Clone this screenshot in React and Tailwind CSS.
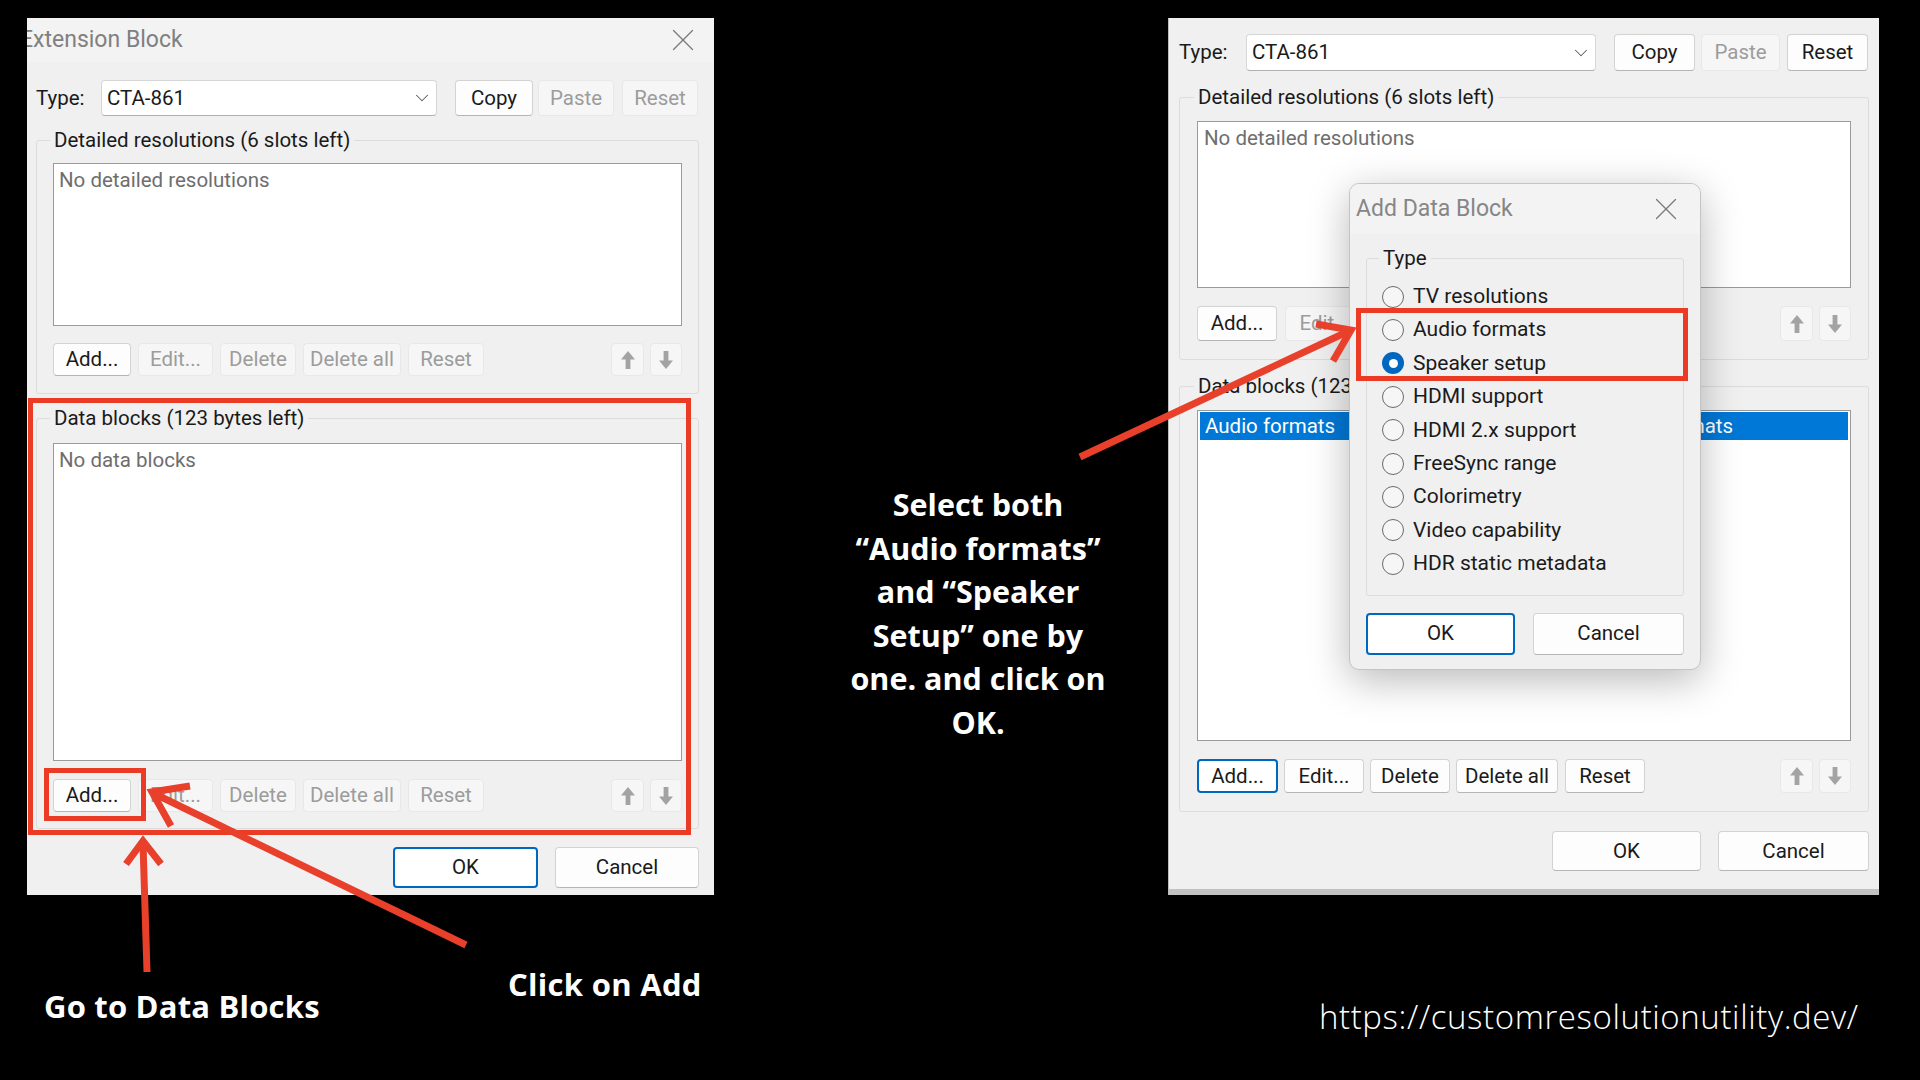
import { ChevronDown, X } from "lucide-react";
import clsx from "clsx";

const ui = { fontFamily: "Roboto, 'Noto Sans', sans-serif" };

const Btn = ({ children, w, h = "h-full", disabled, focus, className }) => (
  <div
    className={clsx(
      "flex items-center justify-center rounded-[4px] border shrink-0",
      disabled
        ? "bg-[#f6f6f6] border-[#e8e8e8] text-[#9c9c9c]"
        : focus
        ? "bg-white border-2 border-[#0067c0] text-[#1a1a1a]"
        : "bg-[#fdfdfd] border-[#d3d3d3] border-b-[#b5b5b5] text-[#1a1a1a]",
      w,
      h,
      className
    )}
  >
    {children}
  </div>
);

// thick windows-style arrow glyph
const BlockArrow = ({ down }) => (
  <svg width="16" height="20" viewBox="0 0 16 20" className={down ? "rotate-180" : ""}>
    <polygon points="8,1 1,9.5 15,9.5" fill="#a3a3a3" />
    <rect x="5.6" y="8" width="4.8" height="11" fill="#a3a3a3" />
  </svg>
);

const Arrows = () => (
  <>
    <Btn w="w-[33px]" disabled className="ml-auto">
      <BlockArrow />
    </Btn>
    <Btn w="w-[32px]" disabled className="ml-[6px]">
      <BlockArrow down />
    </Btn>
  </>
);

const Legend = ({ children }) => (
  <legend className="-ml-[3px] px-[4px] leading-[28px] text-[20.5px] text-[#1a1a1a]">{children}</legend>
);

const LeftDialog = () => (
  <div style={ui} className="absolute left-[27px] top-[18px] w-[687px] h-[877px] bg-[#f0f0f0] overflow-hidden flex flex-col text-[20.5px]">
    <div className="h-[44px] bg-[#f3f3f3] flex items-center justify-between shrink-0">
      <span className="-ml-[7px] text-[#808080] text-[23px]">Extension Block</span>
      <X size={38} strokeWidth={0.8} color="#7a7a7a" className="mr-[12px]" />
    </div>

    <div className="mt-[18px] h-[36px] flex items-center pl-[9px] shrink-0">
      <span className="w-[65px] text-[#1a1a1a]">Type:</span>
      <div className="w-[336px] h-full bg-white border border-[#d6d6d6] border-b-[#b0b0b0] rounded-[4px] flex items-center justify-between pl-[5px] pr-[3px] text-[#1a1a1a]">
        CTA-861
        <ChevronDown size={22} strokeWidth={1.1} color="#5a5a5a" />
      </div>
      <Btn w="w-[78px]" className="ml-[18px]">Copy</Btn>
      <Btn w="w-[76px]" disabled className="ml-[5px]">Paste</Btn>
      <Btn w="w-[76px]" disabled className="ml-[8px]">Reset</Btn>
    </div>

    <fieldset className="mt-[10px] ml-[9px] mr-[15px] border border-[#dcdcdc] rounded-[3px] px-[16px] pt-[9px] pb-[17px]">
      <Legend>Detailed resolutions (6 slots left)</Legend>
      <div className="h-[163px] bg-white border border-[#9a9a9a] pl-[5px] pt-[1px] text-[#6e6e6e]">No detailed resolutions</div>
      <div className="mt-[17px] h-[33px] flex">
        <Btn w="w-[78px]">Add...</Btn>
        <Btn w="w-[75px]" disabled className="ml-[7px]">Edit...</Btn>
        <Btn w="w-[76px]" disabled className="ml-[7px]">Delete</Btn>
        <Btn w="w-[98px]" disabled className="ml-[7px]">Delete all</Btn>
        <Btn w="w-[76px]" disabled className="ml-[7px]">Reset</Btn>
        <Arrows />
      </div>
    </fieldset>

    <fieldset className="mt-[10px] ml-[9px] mr-[15px] border border-[#dcdcdc] rounded-[3px] px-[16px] pt-[11px] pb-[16px]">
      <Legend>Data blocks (123 bytes left)</Legend>
      <div className="h-[318px] bg-white border border-[#9a9a9a] pl-[5px] pt-[1px] text-[#6e6e6e]">No data blocks</div>
      <div className="mt-[18px] h-[33px] flex">
        <Btn w="w-[78px]">Add...</Btn>
        <Btn w="w-[75px]" disabled className="ml-[7px]">Edit...</Btn>
        <Btn w="w-[76px]" disabled className="ml-[7px]">Delete</Btn>
        <Btn w="w-[98px]" disabled className="ml-[7px]">Delete all</Btn>
        <Btn w="w-[76px]" disabled className="ml-[7px]">Reset</Btn>
        <Arrows />
      </div>
    </fieldset>

    <div className="mt-[18px] h-[41px] flex justify-end pr-[15px] shrink-0">
      <Btn w="w-[145px]" focus>OK</Btn>
      <Btn w="w-[144px]" className="ml-[17px]">Cancel</Btn>
    </div>

    {/* annotation boxes */}
    <div className="absolute left-[1px] top-[380px] w-[663px] h-[437px] border-[5px] border-[#ec3b24]" />
    <div className="absolute left-[17px] top-[750px] w-[102px] h-[53px] border-[5px] border-[#ec3b24]" />
  </div>
);

const radios = [
  "TV resolutions",
  "Audio formats",
  "Speaker setup",
  "HDMI support",
  "HDMI 2.x support",
  "FreeSync range",
  "Colorimetry",
  "Video capability",
  "HDR static metadata",
];

const Popup = () => (
  <div className="absolute left-[180px] top-[165px] w-[352px] h-[487px] bg-[#f0f0f0] border border-[#c4c4c4] rounded-[10px] shadow-[0_10px_40px_rgba(0,0,0,0.28)] flex flex-col overflow-hidden">
    <div className="h-[50px] bg-[#f3f3f3] flex items-center justify-between shrink-0">
      <span className="ml-[6px] text-[23px] text-[#868686]">Add Data Block</span>
      <X size={38} strokeWidth={0.8} color="#7a7a7a" className="mr-[15px]" />
    </div>
    <fieldset className="mt-[10px] mx-[16px] border border-[#dcdcdc] rounded-[3px] pl-[15px] pt-[8px] pb-[14px]">
      <Legend>Type</Legend>
      {radios.map((r) => (
        <div key={r} className="h-[33.4px] flex items-center text-[#1a1a1a]">
          {r === "Speaker setup" ? (
            <span className="w-[22px] h-[22px] rounded-full bg-[#0067c0] flex items-center justify-center shrink-0">
              <span className="w-[9px] h-[9px] rounded-full bg-white" />
            </span>
          ) : (
            <span className="w-[22px] h-[22px] rounded-full border-[1.5px] border-[#6b6b6b] bg-[#f6f6f6] shrink-0" />
          )}
          <span className="ml-[9px] text-[21px]">{r}</span>
        </div>
      ))}
    </fieldset>
    <div className="mt-[17px] h-[42px] flex mx-[16px]">
      <Btn w="w-[149px]" focus>OK</Btn>
      <Btn w="w-[151px]" className="ml-[18px]">Cancel</Btn>
    </div>
    <div className="absolute left-[6px] top-[124px] w-[332px] h-[73px] border-[5px] border-[#ec3b24]" />
  </div>
);

const RightDialog = () => (
  <div style={ui} className="absolute left-[1168px] top-[18px] w-[711px] h-[877px] bg-[#f0f0f0] border-l border-[#bdbdbd] flex flex-col text-[20.5px]">
    <div className="mt-[16px] h-[37px] flex items-center pl-[10px] shrink-0">
      <span className="w-[67px] text-[#1a1a1a]">Type:</span>
      <div className="w-[350px] h-full bg-white border border-[#d6d6d6] border-b-[#b0b0b0] rounded-[4px] flex items-center justify-between pl-[5px] pr-[3px] text-[#1a1a1a]">
        CTA-861
        <ChevronDown size={22} strokeWidth={1.1} color="#5a5a5a" />
      </div>
      <Btn w="w-[81px]" className="ml-[18px]">Copy</Btn>
      <Btn w="w-[79px]" disabled className="ml-[6px]">Paste</Btn>
      <Btn w="w-[81px]" className="ml-[7px]">Reset</Btn>
    </div>

    <fieldset className="mt-[12px] mx-[10px] border border-[#dcdcdc] rounded-[3px] px-[17px] pt-[10px] pb-[18px]">
      <Legend>Detailed resolutions (6 slots left)</Legend>
      <div className="h-[167px] bg-white border border-[#9a9a9a] pl-[6px] pt-[1px] text-[#6e6e6e]">No detailed resolutions</div>
      <div className="mt-[18px] h-[35px] flex">
        <Btn w="w-[80px]">Add...</Btn>
        <Btn w="w-[80px]" disabled className="ml-[8px]">Edit...</Btn>
        <Btn w="w-[80px]" disabled className="ml-[6px]">Delete</Btn>
        <Btn w="w-[102px]" disabled className="ml-[6px]">Delete all</Btn>
        <Btn w="w-[80px]" disabled className="ml-[7px]">Reset</Btn>
        <Arrows />
      </div>
    </fieldset>

    <fieldset className="mt-[12px] mx-[10px] border border-[#dcdcdc] rounded-[3px] px-[17px] pt-[10px] pb-[18px]">
      <Legend>Data blocks (123 bytes left)</Legend>
      <div className="h-[331px] bg-white border border-[#9a9a9a] pt-[1px] px-[2px]">
        <div className="h-[28px] bg-[#0078d7] text-white flex items-center pl-[5px]">
          <span>Audio formats</span>
          <span className="ml-[268px]">Audio formats</span>
        </div>
      </div>
      <div className="mt-[18px] h-[34px] flex">
        <Btn w="w-[81px]" focus>Add...</Btn>
        <Btn w="w-[80px]" className="ml-[6px]">Edit...</Btn>
        <Btn w="w-[80px]" className="ml-[6px]">Delete</Btn>
        <Btn w="w-[102px]" className="ml-[6px]">Delete all</Btn>
        <Btn w="w-[80px]" className="ml-[7px]">Reset</Btn>
        <Arrows />
      </div>
    </fieldset>

    <div className="mt-[19px] h-[40px] flex justify-end pr-[10px] shrink-0">
      <Btn w="w-[149px]">OK</Btn>
      <Btn w="w-[151px]" className="ml-[17px]">Cancel</Btn>
    </div>
    <div className="mt-auto h-[6px] bg-[#c2c2c2] shrink-0" />

    <Popup />
  </div>
);

const Annotations = () => (
  <svg className="absolute inset-0 pointer-events-none" width="1920" height="1080">
    <g stroke="#e8402a" strokeWidth="7" fill="none" strokeLinecap="butt" strokeLinejoin="miter">
      <line x1="147" y1="972" x2="143" y2="843" />
      <polyline points="126,864 143,841 161,864" />
      <line x1="466" y1="945" x2="155" y2="794" />
      <polyline points="171,826 152,792 190,786" />
      <line x1="1080" y1="457" x2="1349" y2="331" />
      <polyline points="1316,324 1351,330 1333,361" />
    </g>
  </svg>
);

export default function App() {
  return (
    <div className="relative w-[1920px] h-[1080px] bg-black overflow-hidden">
      <LeftDialog />
      <RightDialog />
      <Annotations />

      <div
        className="absolute left-[798px] top-[483px] w-[360px] text-center text-white font-bold text-[30.5px] leading-[43.5px]"
        style={{ fontFamily: "'Open Sans', sans-serif" }}
      >
        Select both
        <br />
        “Audio formats”
        <br />
        and “Speaker
        <br />
        Setup” one by
        <br />
        one. and click on
        <br />
        OK.
      </div>

      <div
        className="absolute left-[44px] top-[991px] text-white font-bold text-[31px] leading-none tracking-[0.2px]"
        style={{ fontFamily: "'Open Sans', sans-serif" }}
      >
        Go to Data Blocks
      </div>
      <div
        className="absolute left-[508px] top-[969px] text-white font-bold text-[31px] leading-none tracking-[0.3px]"
        style={{ fontFamily: "'Open Sans', sans-serif" }}
      >
        Click on Add
      </div>
      <div
        className="absolute left-[1319px] top-[1000px] text-white font-light text-[33px] leading-none tracking-[0.6px]"
        style={{ fontFamily: "'Open Sans', sans-serif" }}
      >
        https://customresolutionutility.dev/
      </div>
    </div>
  );
}
